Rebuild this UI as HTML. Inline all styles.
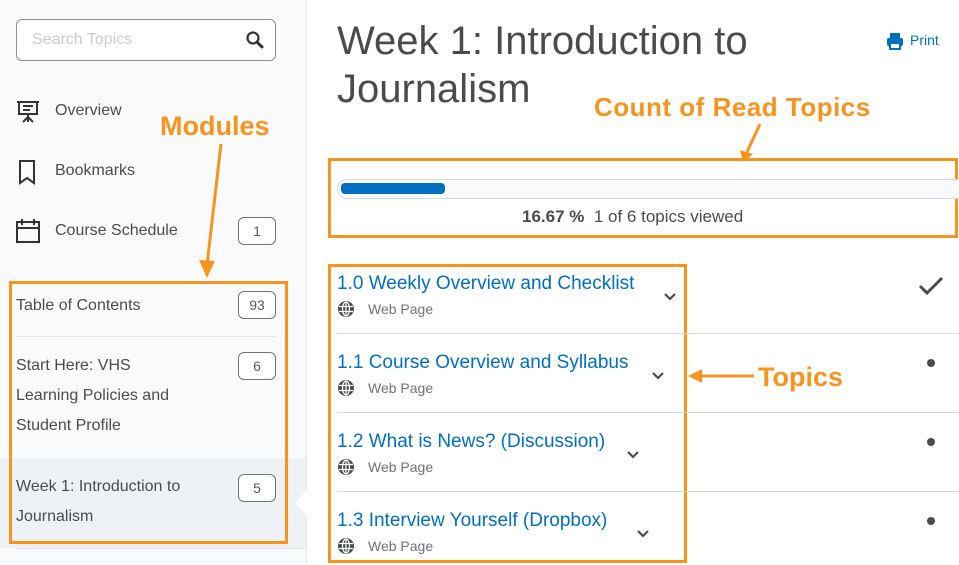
<!DOCTYPE html>
<html><head><style>
*{margin:0;padding:0;box-sizing:border-box}
body{width:959px;height:565px;overflow:hidden;background:#fff;font-family:"Liberation Sans",sans-serif;color:#494c4e;position:relative}
.abs{position:absolute}
.side{left:0;top:0;width:307px;height:565px;background:#f9fafc;border-right:1px solid #e3e6ea}
.badge{position:absolute;width:38px;height:28px;border:1px solid #6e7477;border-radius:6px;background:#fff;font-size:14px;text-align:center;line-height:26px;color:#565a5c}
.nav{font-size:16px;color:#494c4e}
.or{border:3px solid #f7941d}
.ot{color:#f7941d;font-weight:bold;font-family:"Liberation Sans",sans-serif}
.link{color:#006fbf;font-size:19px}
.wp{font-size:14px;color:#6e7376}
.hr{height:1px;background:#d3d9e3}
</style></head><body>
<div class="abs side"></div>
<div class="abs" style="left:16px;top:19px;width:260px;height:42px;border:1px solid #8a8f93;border-radius:6px;background:#fff"></div>
<div class="abs" style="left:32px;top:31px;font-size:16px;color:#c7ccd2">Search Topics</div>
<svg class="abs" style="left:245px;top:30px" width="20" height="20" viewBox="0 0 20 20"><circle cx="8" cy="8" r="5.5" fill="none" stroke="#333" stroke-width="2.2"/><path d="M12 12l5 5" stroke="#333" stroke-width="3" stroke-linecap="round"/></svg>
<svg class="abs" style="left:16px;top:99px" width="24" height="26" viewBox="0 0 24 26"><rect x="3" y="3" width="18" height="12" fill="none" stroke="#333" stroke-width="2"/><path d="M1 3h22M7 7h10M7 11h7M12 15v8M12 18l-5 5M12 18l5 5" stroke="#333" stroke-width="2"/></svg>
<div class="abs nav" style="left:55px;top:102px">Overview</div>
<svg class="abs" style="left:18px;top:159px" width="20" height="26" viewBox="0 0 20 26"><path d="M2 2h14v22l-7-5-7 5z" fill="none" stroke="#333" stroke-width="2"/></svg>
<div class="abs nav" style="left:55px;top:162px">Bookmarks</div>
<svg class="abs" style="left:16px;top:218px" width="24" height="26" viewBox="0 0 24 26"><rect x="1" y="4" width="22" height="20" fill="none" stroke="#333" stroke-width="2"/><path d="M1 10h22M6 1v6M18 1v6" stroke="#333" stroke-width="2"/></svg>
<div class="abs nav" style="left:55px;top:222px">Course Schedule</div>
<div class="badge" style="left:238px;top:217px">1</div>
<div class="abs" style="left:0;top:458px;width:306px;height:90px;background:#eef1f5"></div>
<div class="abs" style="left:295px;top:490px;width:0;height:0;border-top:13px solid transparent;border-bottom:13px solid transparent;border-right:12px solid #fff"></div>
<div class="abs nav" style="left:16px;top:297px;font-size:16px">Table of Contents</div>
<div class="badge" style="left:238px;top:291px">93</div>
<div class="abs hr" style="left:16px;top:336px;width:260px;background:#e3e7ed"></div>
<div class="abs nav" style="left:16px;top:351px;line-height:30px">Start Here: VHS<br>Learning Policies and<br>Student Profile</div>
<div class="badge" style="left:238px;top:352px">6</div>
<div class="abs nav" style="left:16px;top:472px;line-height:30px">Week 1: Introduction to<br>Journalism</div>
<div class="badge" style="left:238px;top:474px">5</div>
<div class="abs hr" style="left:16px;top:548px;width:290px;background:#e3e7ed"></div>
<div class="abs or" style="left:9px;top:281px;width:279px;height:263px"></div>
<div class="abs ot" style="left:160px;top:111px;font-size:27px">Modules</div>
<svg class="abs" style="left:195px;top:140px" width="30" height="140"><path d="M26 4L12 125" stroke="#f7941d" stroke-width="3"/><path d="M4 120l8 18 8-17z" fill="#f7941d"/></svg>

<div class="abs" style="left:337px;top:17px;font-size:40px;line-height:48px;color:#494c4e">Week 1: Introduction to<br>Journalism</div>
<svg class="abs" style="left:886px;top:32px" width="18" height="18" viewBox="0 0 18 18"><rect x="4" y="1" width="10" height="5" fill="#006fbf"/><rect x="1" y="6" width="16" height="8" rx="2" fill="#006fbf"/><rect x="4" y="11" width="10" height="6" fill="#fff" stroke="#006fbf" stroke-width="2"/></svg>
<div class="abs" style="left:910px;top:32px;font-size:14px;color:#006fbf">Print</div>
<div class="abs ot" style="left:594px;top:92px;font-size:26px;letter-spacing:0.5px">Count of Read Topics</div>
<svg class="abs" style="left:735px;top:120px" width="30" height="45"><path d="M25 4L12 32" stroke="#f7941d" stroke-width="3"/><path d="M5 30l3 12 10-8z" fill="#f7941d"/></svg>
<div class="abs or" style="left:328px;top:158px;width:630px;height:80px"></div>
<div class="abs" style="left:337px;top:179px;width:622px;height:20px;border:1px solid #d3d9e3;border-right:none;border-radius:10px 0 0 10px;background:#f9fafc"></div>
<div class="abs" style="left:341px;top:183px;width:104px;height:11px;background:#006fbf;border-radius:4px"></div>
<div class="abs" style="left:522px;top:207px;font-size:17px;color:#494c4e"><b>16.67 %</b>&nbsp; 1 of 6 topics viewed</div>

<div class="abs or" style="left:328px;top:264px;width:359px;height:299px"></div>
<div class="abs link" style="left:337px;top:273px">1.0 Weekly Overview and Checklist</div>
<div class="abs link" style="left:337px;top:352px">1.1 Course Overview and Syllabus</div>
<div class="abs link" style="left:337px;top:431px">1.2 What is News? (Discussion)</div>
<div class="abs link" style="left:337px;top:510px">1.3 Interview Yourself (Dropbox)</div>
<div class="abs hr" style="left:337px;top:333px;width:622px"></div>
<div class="abs hr" style="left:337px;top:412px;width:622px"></div>
<div class="abs hr" style="left:337px;top:491px;width:622px"></div>
<svg width="0" height="0" style="position:absolute"><defs><g id="gl"><circle cx="9" cy="9" r="8" fill="#494c4e"/><ellipse cx="9" cy="9" rx="3.5" ry="7" fill="none" stroke="#fff" stroke-width="1.2"/><path d="M2 6.5h14M2 11.5h14M9 2v14" stroke="#fff" stroke-width="1.2"/></g><path id="cv" d="M2 2l5 5 5-5" fill="none" stroke="#494c4e" stroke-width="2.2"/></defs></svg>
<svg class="abs" style="left:337px;top:300px" width="18" height="18"><use href="#gl"/></svg>
<svg class="abs" style="left:337px;top:379px" width="18" height="18"><use href="#gl"/></svg>
<svg class="abs" style="left:337px;top:458px" width="18" height="18"><use href="#gl"/></svg>
<svg class="abs" style="left:337px;top:537px" width="18" height="18"><use href="#gl"/></svg>
<div class="abs wp" style="left:368px;top:301px">Web Page</div>
<div class="abs wp" style="left:368px;top:380px">Web Page</div>
<div class="abs wp" style="left:368px;top:459px">Web Page</div>
<div class="abs wp" style="left:368px;top:538px">Web Page</div>
<svg class="abs" style="left:663px;top:292px" width="14" height="10"><use href="#cv"/></svg>
<svg class="abs" style="left:651px;top:371px" width="14" height="10"><use href="#cv"/></svg>
<svg class="abs" style="left:626px;top:450px" width="14" height="10"><use href="#cv"/></svg>
<svg class="abs" style="left:636px;top:529px" width="14" height="10"><use href="#cv"/></svg>
<svg class="abs" style="left:918px;top:276px" width="26" height="20"><path d="M2 10l7 7L24 2" fill="none" stroke="#494c4e" stroke-width="3"/></svg>
<div class="abs" style="left:927px;top:359px;width:8px;height:8px;border-radius:50%;background:#494c4e"></div>
<div class="abs" style="left:927px;top:438px;width:8px;height:8px;border-radius:50%;background:#494c4e"></div>
<div class="abs" style="left:927px;top:517px;width:8px;height:8px;border-radius:50%;background:#494c4e"></div>
<svg class="abs" style="left:686px;top:366px" width="70" height="20"><path d="M68 10H14" stroke="#f7941d" stroke-width="3"/><path d="M2 10l14-7v14z" fill="#f7941d"/></svg>
<div class="abs ot" style="left:758px;top:362px;font-size:27px">Topics</div>
</body></html>
